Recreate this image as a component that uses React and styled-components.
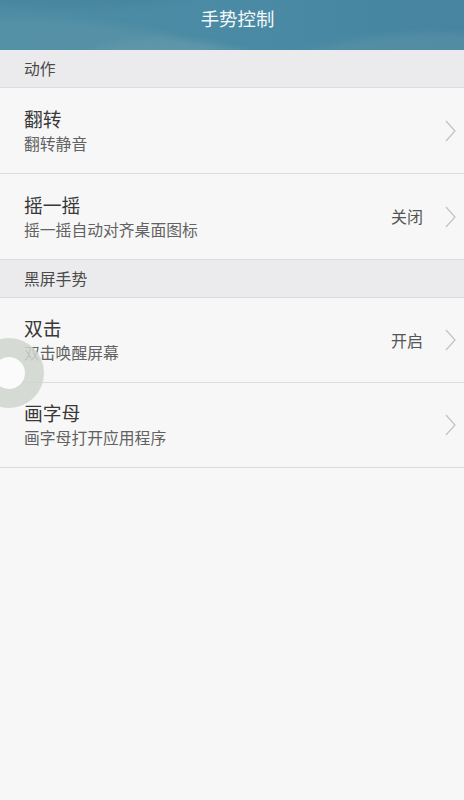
import React from "react";
import styled, { createGlobalStyle } from "styled-components";

const Global = createGlobalStyle`
  html, body { margin: 0; padding: 0; background: #f7f7f7; }
  #root { min-height: 800px; }
`;
const Page = styled.div`
  position: relative;
  width: 464px;
  height: 800px;
  overflow: hidden;
  background: #f7f7f7;
  font-family: "Noto Sans CJK SC", "Noto Sans", sans-serif;
`;
const Header = styled.header`
  position: relative;
  height: 50px;
  box-sizing: border-box;
  padding: 0 0 15px 11px;
  display: flex;
  align-items: center;
  justify-content: center;
  background: #4a8aa3;
  overflow: hidden;
`;
const HeaderWaves = styled.svg`
  position: absolute;
  inset: 0;
  width: 100%;
  height: 100%;
`;
const Title = styled.h1`
  position: relative;
  margin: 0;
  font-size: 18.4px;
  font-weight: 400;
  line-height: 36px;
  color: #f4f8fa;
`;
const Section = styled.div`
  box-sizing: border-box;
  height: 38px;
  padding-left: 24px;
  display: flex;
  align-items: center;
  background: #ebebed;
  border-bottom: 1px solid #dcdcdc;
  font-size: 15.8px;
  color: #4a4a4a;
`;
const Row = styled.div`
  box-sizing: border-box;
  height: ${(p) => p.$h}px;
  display: flex;
  align-items: center;
  padding: 0 7px 1px 24px;
  border-bottom: 1px solid #dcdcdc;
`;
const Texts = styled.div`
  flex: 1;
  display: flex;
  flex-direction: column;
`;
const RowTitle = styled.div`
  font-size: 18.8px;
  line-height: 26px;
  color: #383838;
`;
const RowSub = styled.div`
  font-size: 15.8px;
  line-height: 23px;
  color: #626262;
`;
const Value = styled.span`
  font-size: 16px;
  color: #555;
  margin-right: 20px;
`;
const Chevron = styled.svg`
  width: 14px;
  height: 22px;
  flex: none;
  margin-top: 1px;
`;
const Ball = styled.div`
  position: absolute;
  left: -26px;
  top: 338px;
  width: 70px;
  height: 70px;
  box-sizing: border-box;
  border-radius: 50%;
  border: 19px solid rgba(208, 213, 207, 0.85);
  background: #fbfbfb;
  background-clip: padding-box;
`;

const Arrow = () => (
  <Chevron viewBox="0 0 14 22">
    <path d="M3 1 L12 11 L3 21" fill="none" stroke="#c4c4c4" strokeWidth="1.3" />
  </Chevron>
);

const Item = ({ title, sub, value, h }) => (
  <Row $h={h}>
    <Texts>
      <RowTitle>{title}</RowTitle>
      <RowSub>{sub}</RowSub>
    </Texts>
    {value && <Value>{value}</Value>}
    <Arrow />
  </Row>
);

export default function App() {
  return (
    <Page>
      <Global />
      <Header>
        <HeaderWaves viewBox="0 0 464 50" preserveAspectRatio="none">
          <defs>
            <linearGradient id="base" x1="0" y1="0" x2="1" y2="0">
              <stop offset="0" stopColor="#4d8ca4" />
              <stop offset="0.55" stopColor="#4a8aa4" />
              <stop offset="1" stopColor="#46849f" />
            </linearGradient>
            <filter id="soft">
              <feGaussianBlur stdDeviation="3" />
            </filter>
          </defs>
          <rect width="464" height="50" fill="url(#base)" />
          <g filter="url(#soft)">
            <path d="M-10 20 C80 14 160 30 250 56 L-10 56 Z" fill="#5c95a8" opacity="0.5" />
            <path d="M80 56 C130 30 190 34 260 56 Z" fill="#6a9bab" opacity="0.55" />
            <path d="M290 56 C360 34 420 30 474 34 L474 56 Z" fill="#5b93a8" opacity="0.5" />
            <path d="M-10 -6 H190 C140 10 60 10 -10 6 Z" fill="#418299" opacity="0.5" />
          </g>
        </HeaderWaves>
        <Title>手势控制</Title>
      </Header>
      <Section>动作</Section>
      <Item h={86} title="翻转" sub="翻转静音" />
      <Item h={86} title="摇一摇" sub="摇一摇自动对齐桌面图标" value="关闭" />
      <Section>黑屏手势</Section>
      <Item h={85} title="双击" sub="双击唤醒屏幕" value="开启" />
      <Item h={85} title="画字母" sub="画字母打开应用程序" />
      <Ball />
    </Page>
  );
}
